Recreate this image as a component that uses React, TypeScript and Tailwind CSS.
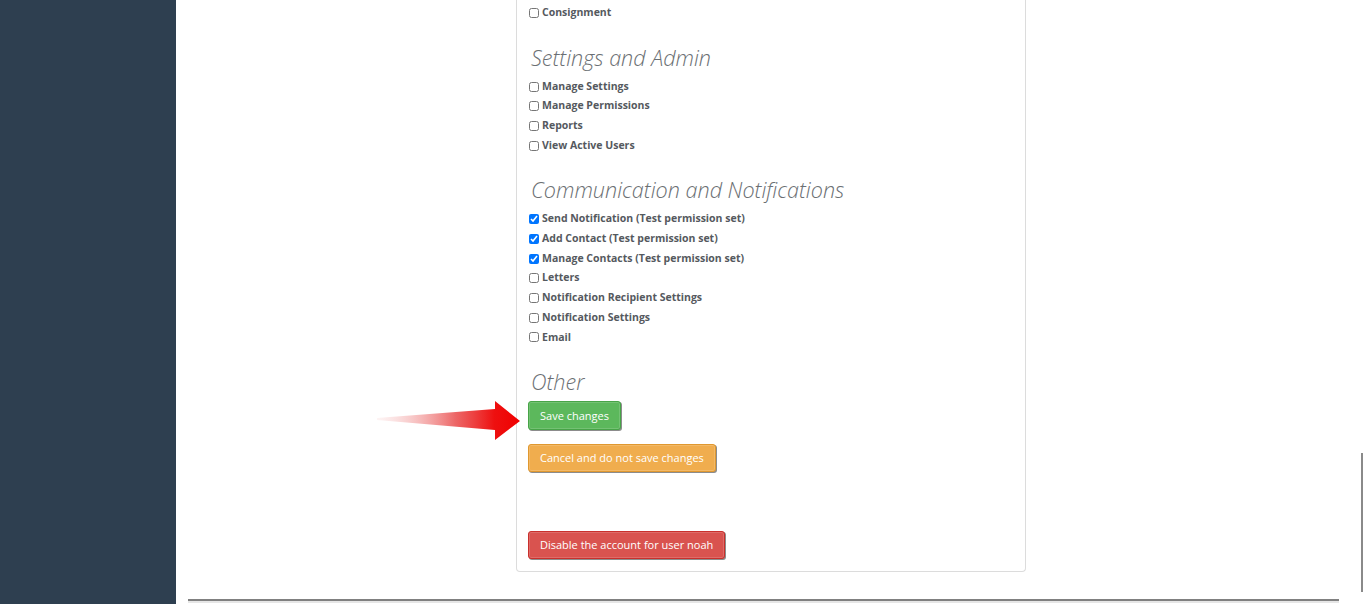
import React from 'react';

const settingsItems = ['Manage Settings', 'Manage Permissions', 'Reports', 'View Active Users'];

const commItems: { label: string; checked: boolean }[] = [
    { label: 'Send Notification (Test permission set)', checked: true },
    { label: 'Add Contact (Test permission set)', checked: true },
    { label: 'Manage Contacts (Test permission set)', checked: true },
    { label: 'Letters', checked: false },
    { label: 'Notification Recipient Settings', checked: false },
    { label: 'Notification Settings', checked: false },
    { label: 'Email', checked: false },
];

const PermRow: React.FC<{ label: string; checked?: boolean }> = ({ label, checked = false }) => (
    <label className="flex items-center h-[19.7px] gap-[3px] text-[10.5px] font-bold text-[#55595e]">
        <input type="checkbox" defaultChecked={checked} className="w-[10px] h-[10px] m-0 accent-[#0075ff]" />
        <span>{label}</span>
    </label>
);

const SectionTitle: React.FC<{ children: React.ReactNode; className?: string }> = ({ children, className = '' }) => (
    <h2 className={`text-[21.6px] leading-[26px] italic font-light text-[#6b6f73] pl-[2px] ${className}`}>{children}</h2>
);

export default function App() {
    return (
        <div className="relative flex h-[604px] w-[1366px] overflow-hidden bg-white" style={{ fontFamily: '"Open Sans", "Liberation Sans", sans-serif' }}>
            {/* Sidebar */}
            <aside className="w-[176px] shrink-0 bg-[#2e3f50]" />

            {/* Main */}
            <main className="flex-1 flex flex-col">
                <div className="mx-auto w-[510px] border-x border-b border-[#dcdcdc] rounded-b-[4px] px-[12px] pt-[3px] pb-[12px]">
                    <PermRow label="Consignment" />

                    <SectionTitle className="mt-[22px] mb-[6px]">Settings and Admin</SectionTitle>
                    {settingsItems.map((s) => (
                        <PermRow key={s} label={s} />
                    ))}

                    <SectionTitle className="mt-[22px] mb-[6px]">Communication and Notifications</SectionTitle>
                    {commItems.map((c) => (
                        <PermRow key={c.label} label={c.label} checked={c.checked} />
                    ))}

                    <SectionTitle className="mt-[22px] mb-[6px]">Other</SectionTitle>
                    <div className="flex flex-col items-start -ml-px">
                        <button className="h-[29px] px-[11px] text-[11px] text-white bg-[#5cb85c] border border-[#47a447] rounded-[3px] shadow-[inset_0_0_0_1px_rgba(255,255,255,0.15),1px_1px_0_rgba(0,0,0,0.45)]">
                            Save changes
                        </button>
                        <button className="mt-[14px] h-[28px] px-[11px] text-[11px] text-white bg-[#f0ad4e] border border-[#e0982f] rounded-[3px] shadow-[inset_0_0_0_1px_rgba(255,255,255,0.15),1px_1px_0_rgba(0,0,0,0.45)]">
                            Cancel and do not save changes
                        </button>
                        <button className="mt-[59px] h-[28px] px-[11px] text-[11px] text-white bg-[#d9534f] border border-[#c9302c] rounded-[3px] shadow-[inset_0_0_0_1px_rgba(255,255,255,0.15),1px_1px_0_rgba(0,0,0,0.45)]">
                            Disable the account for user noah
                        </button>
                    </div>
                </div>

                {/* Footer rule */}
                <div className="mt-[27px] pl-[12px] pr-[27px]">
                    <div className="h-[2px] bg-[#808080]" />
                    <div className="h-[2px] bg-[#e6e6e6]" />
                </div>
            </main>

            {/* Scrollbar thumb */}
            <div className="absolute right-[3px] top-[453px] w-[2px] h-[139px] bg-[#8a8a8a]" />

            {/* Pointer arrow */}
            <svg className="absolute left-[377px] top-[399px]" width="146" height="44" viewBox="0 0 146 44">
                <defs>
                    <linearGradient id="arrowGrad" x1="0" y1="0" x2="1" y2="0">
                        <stop offset="0" stopColor="#f4b8b8" stopOpacity="0.15" />
                        <stop offset="0.55" stopColor="#e84040" stopOpacity="0.8" />
                        <stop offset="0.82" stopColor="#ee1010" />
                        <stop offset="1" stopColor="#f00000" />
                    </linearGradient>
                </defs>
                <path d="M0 19 L118 10 L118 2 L143 22 L118 41 L118 31 L0 21 Z" fill="url(#arrowGrad)" />
            </svg>
        </div>
    );
}
